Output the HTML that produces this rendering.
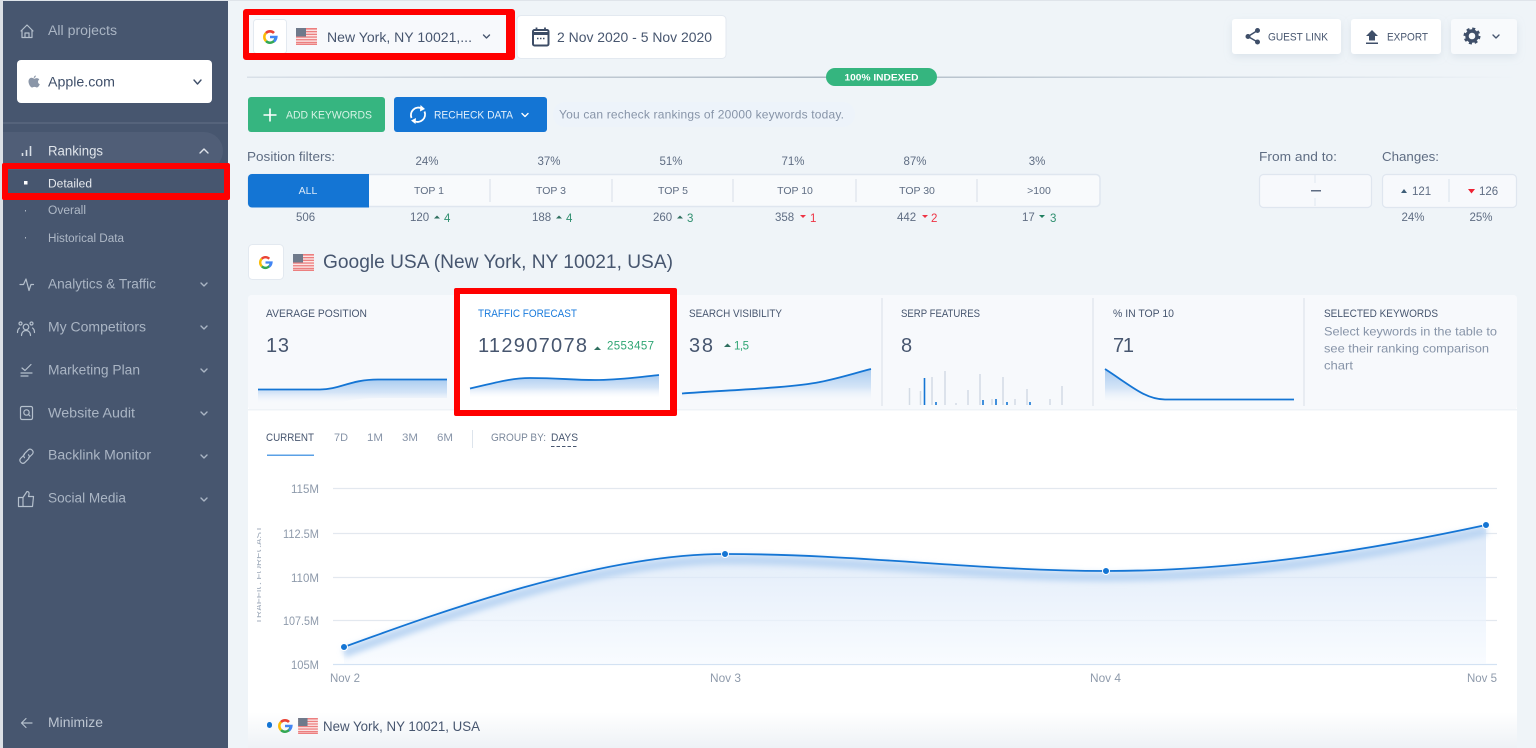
<!DOCTYPE html>
<html><head><meta charset="utf-8"><title>Rankings</title>
<style>
html,body{margin:0;padding:0;width:1536px;height:748px;overflow:hidden;background:#eff4f8}
svg{display:block}
text{font-family:"Liberation Sans",sans-serif;fill:#47566f}
.ch{fill:none;stroke-width:1.4;stroke-linecap:round;stroke-linejoin:round}
.ic{fill:none;stroke:#b4bfcc;stroke-width:1.2;stroke-linecap:round;stroke-linejoin:round}
.nav{font-size:13.5px;fill:#aab5c4}
.sub{font-size:11.5px;fill:#aeb8c6}
.pct{font-size:11.5px;fill:#5f6d83;text-anchor:middle}
.cnt{font-size:11.5px;fill:#5f6d83}
.top{font-size:10.5px;fill:#5f6d83;text-anchor:middle}
.cap{font-size:11px;fill:#47566f}
.num{font-size:20px;fill:#47566f}
.axis{font-size:12px;fill:#8e9aab}
</style></head><body>
<svg width="1536" height="748" viewBox="0 0 1536 748" xmlns="http://www.w3.org/2000/svg">
<defs>
<symbol id="g" viewBox="0 0 20 20" overflow="visible">
<path d="M17 10 A7 7 0 0 1 5 15" fill="none" stroke="#34a853" stroke-width="3.2"/>
<path d="M5 15 A7 7 0 0 1 5 5" fill="none" stroke="#fbbc05" stroke-width="3.2"/>
<path d="M5 5 A7 7 0 0 1 15 5" fill="none" stroke="#ea4335" stroke-width="3.2"/>
<path d="M10 10 H18 A8 8 0 0 1 15 15.5" fill="none" stroke="#4285f4" stroke-width="3"/>
</symbol>
<symbol id="flag" viewBox="0 0 21 17">
<rect width="21" height="17" rx="2" fill="#fbe4e4"/>
<g fill="#ec7f7f"><rect y="0" width="21" height="1.6"/><rect y="3" width="21" height="1.3"/><rect y="5.7" width="21" height="1.3"/><rect y="8.4" width="21" height="1.3"/><rect y="11.1" width="21" height="1.3"/><rect y="13.8" width="21" height="1.3"/><rect y="15.6" width="21" height="1.4"/></g>
<rect width="10" height="8.5" fill="#6f7a8b"/>
</symbol>
<linearGradient id="area" x1="0" y1="0" x2="0" y2="1"><stop offset="0" stop-color="#cfe0f5"/><stop offset="1" stop-color="#f6faff"/></linearGradient>
<linearGradient id="spark" x1="0" y1="0" x2="0" y2="1"><stop offset="0" stop-color="#a9cbf0"/><stop offset=".55" stop-color="#d5e5f7"/><stop offset="1" stop-color="#f7f9fc" stop-opacity="0"/></linearGradient>
<linearGradient id="bot" x1="0" y1="0" x2="0" y2="1"><stop offset="0" stop-color="#fff"/><stop offset="1" stop-color="#eef2f6"/></linearGradient>
<linearGradient id="hr" x1="0" y1="0" x2="1" y2="0"><stop offset="0" stop-color="#d9e0e8"/><stop offset=".45" stop-color="#aeb9c4"/><stop offset=".75" stop-color="#cfd8e1"/><stop offset="1" stop-color="#eff4f8"/></linearGradient>
<filter id="bl" x="-10%" y="-50%" width="120%" height="200%"><feGaussianBlur stdDeviation="3"/></filter>
<filter id="sh" x="-20%" y="-30%" width="140%" height="170%"><feDropShadow dx="0" dy="3" stdDeviation="4" flood-color="#9fb0c4" flood-opacity=".25"/></filter>
<clipPath id="yclip"><rect x="257" y="525" width="4" height="102"/></clipPath>
</defs>

<!-- page bg -->
<rect width="1536" height="748" fill="#eff4f8"/>
<rect width="1536" height="1" fill="#dfe4ea"/>

<!-- sidebar -->
<rect x="0" y="0" width="3" height="748" fill="#dde1e6"/>
<rect x="3" y="1" width="225" height="747" fill="#47566f"/>
<rect x="3" y="122" width="225" height="2" fill="#55637b"/>
<path d="M3 132 H204 A19 19 0 0 1 204 170 H3Z" fill="#505e77"/>

<path class="ic" d="M21 31 L27 25 L33 31 M22 30 V37.5 H32 V30 M25 37.5 V33 H29 V37.5"/>
<text class="nav" x="48" y="35" textLength="69" lengthAdjust="spacingAndGlyphs">All projects</text>
<rect x="17" y="60" width="195" height="43" rx="4" fill="#fff"/>
<path d="M35.800 75.500c.2 1.200-.8 2.400-2 2.500-.2-1.200.9-2.400 2-2.500zM34.300 78.700c.8 0 1.500-.6 2.400-.6 1 0 2 .5 2.600 1.400-1.900 1.200-1.600 3.900.5 4.800-.6 1.500-1.700 3.200-2.900 3.200-.9 0-1.300-.6-2.400-.6s-1.500.6-2.400.6c-1.600 0-3.600-3.400-3.600-6 0-2.400 1.600-3.700 3.100-3.700 1 0 1.800.7 2.700.9z" fill="#8a96a8"/>
<text x="48" y="86.500" font-size="14" textLength="67" lengthAdjust="spacingAndGlyphs" style="fill:#3f4f69">Apple.com</text>
<path class="ch" stroke="#3f4f69" d="M194 80 L197.500 84 L201 80"/>

<path d="M22.500 156v-3M26.500 156v-6M30.500 156v-10" stroke="#d9dfe6" stroke-width="1.600" fill="none"/>
<text x="48" y="155.500" font-size="13.500" textLength="55" lengthAdjust="spacingAndGlyphs" style="fill:#dfe4ea">Rankings</text>
<path class="ch" stroke="#dfe4ea" d="M200 153 L204 149 L208 153"/>
<rect x="24" y="181" width="3.500" height="3.500" fill="#fff"/>
<text class="sub" x="48" y="187.500" textLength="44" lengthAdjust="spacingAndGlyphs" style="fill:#e6e9ee">Detailed</text>
<rect x="25" y="210" width="1" height="1.500" fill="#aeb8c6"/>
<text class="sub" x="48" y="214" textLength="38" lengthAdjust="spacingAndGlyphs">Overall</text>
<rect x="25" y="237" width="1" height="1.500" fill="#aeb8c6"/>
<text class="sub" x="48" y="242" textLength="76" lengthAdjust="spacingAndGlyphs">Historical Data</text>

<polyline class="ic" points="20,284.500 23.500,284.500 26,279 29,290.500 31,284.500 33.500,284.500"/>
<text class="nav" x="48" y="288.500" textLength="108" lengthAdjust="spacingAndGlyphs">Analytics &amp; Traffic</text>
<path class="ch" stroke="#aab5c4" d="M201 283 L204 286 L207 283"/>

<g class="ic"><circle cx="26" cy="327" r="2.800"/><circle cx="20.500" cy="323.500" r="1.500"/><circle cx="31.500" cy="323.500" r="1.500"/><path d="M21.500 335.500c0-3 2-5 4.500-5s4.500 2 4.500 5M17.500 332.500c0-2 .5-3.500 2-4.500M34.500 332.500c0-2-.5-3.500-2-4.500"/></g>
<text class="nav" x="48" y="331.500" textLength="98" lengthAdjust="spacingAndGlyphs">My Competitors</text>
<path class="ch" stroke="#aab5c4" d="M201 326 L204 329 L207 326"/>

<path class="ic" d="M22 368 L25 370.500 L31 364.500 M21 373 H32 M21 376 H28"/>
<text class="nav" x="48" y="374.500" textLength="92" lengthAdjust="spacingAndGlyphs">Marketing Plan</text>
<path class="ch" stroke="#aab5c4" d="M201 369 L204 372 L207 369"/>

<g class="ic"><rect x="20.500" y="406.500" width="12" height="13" rx="1.500"/><circle cx="26.500" cy="412.500" r="2.700"/><path d="M28.500 414.500 L30 416"/></g>
<text class="nav" x="48" y="417.500" textLength="87" lengthAdjust="spacingAndGlyphs">Website Audit</text>
<path class="ch" stroke="#aab5c4" d="M201 412 L204 415 L207 412"/>

<path class="ic" stroke-width="1" d="M24.500 454.500 L20.500 458.500a3 3 0 0 0 4 4.300L28.500 458.800a3 3 0 0 0 0-4M28.500 458 L32.500 454a3 3 0 0 0-4-4.300L24.500 453.700a3 3 0 0 0 0 4"/>
<text class="nav" x="48" y="459.500" textLength="103" lengthAdjust="spacingAndGlyphs">Backlink Monitor</text>
<path class="ch" stroke="#aab5c4" d="M201 455 L204 458 L207 455"/>

<path class="ic" d="M18.500 497.500 H23 V506.500 H18.500Z M23 497.500 L27 491.500c1.500 0 2.500 1 2 3L28.500 496.500 H33.500 L32.500 506.500 H23"/>
<text class="nav" x="48" y="502.500" textLength="78" lengthAdjust="spacingAndGlyphs">Social Media</text>
<path class="ch" stroke="#aab5c4" d="M201 498 L204 501 L207 498"/>

<path class="ic" d="M32 723 H21.500 M26 718.500 L21.500 723 L26 727.500" stroke="#c3ccd7"/>
<text class="nav" x="48" y="727" textLength="55" lengthAdjust="spacingAndGlyphs" style="fill:#bcc5d1">Minimize</text>

<!-- header -->
<rect x="249" y="15" width="257" height="38" fill="#f7f9fc"/>
<rect x="253.500" y="19.500" width="33" height="34" rx="3" fill="#fff" stroke="#e3e9f0"/>
<use href="#g" x="262" y="29" width="16" height="16"/>
<use href="#flag" x="296" y="28" width="21" height="17"/>
<text x="327" y="42" font-size="13.500" textLength="145" lengthAdjust="spacingAndGlyphs">New York, NY 10021,...</text>
<path class="ch" stroke="#47566f" d="M483.500 35 L486.500 38 L489.500 35"/>

<rect x="517" y="15.500" width="209" height="43" rx="4" fill="#fff" stroke="#e3e9f0"/>
<g fill="none" stroke="#3c4c66"><rect x="533" y="30" width="15.500" height="15.500" rx="1.500" stroke-width="2"/><path d="M533 33.500 H548.500" stroke-width="3"/><path d="M536.500 27.500 V31 M545 27.500 V31" stroke-width="1.800"/><path d="M537 38.500 H544.500" stroke-width="1.500" stroke-dasharray="1.500 1.500"/></g>
<text x="557" y="42" font-size="14" textLength="155" lengthAdjust="spacingAndGlyphs">2 Nov 2020 - 5 Nov 2020</text>

<rect x="1232" y="19" width="109" height="35" rx="3" fill="#fff" filter="url(#sh)"/>
<g fill="#3f4f69" stroke="#3f4f69"><circle cx="1257.500" cy="30.500" r="2"/><circle cx="1248" cy="36.500" r="2"/><circle cx="1257.500" cy="42" r="2"/><path d="M1257.500 30.500 L1248 36.500 L1257.500 42" fill="none" stroke-width="1.500"/></g>
<text x="1268" y="40.500" font-size="11" textLength="60" lengthAdjust="spacingAndGlyphs">GUEST LINK</text>
<rect x="1351" y="19" width="90" height="35" rx="3" fill="#fff" filter="url(#sh)"/>
<path d="M1372 30 L1378 36 H1375 V40.500 H1369 V36 H1366Z M1366 42.500 H1378 V44 H1366Z" fill="#3f4f69"/>
<text x="1387" y="40.500" font-size="11" textLength="41" lengthAdjust="spacingAndGlyphs">EXPORT</text>
<rect x="1451" y="19" width="66" height="35" rx="3" fill="#f8fafc" filter="url(#sh)"/>
<g fill="none" stroke="#3f4f69"><circle cx="1472" cy="36" r="5" stroke-width="3.400"/><circle cx="1472" cy="36" r="7.300" stroke-width="2.400" stroke-dasharray="3 2.730"/></g>
<path class="ch" stroke="#47566f" d="M1493 35 L1496 38 L1499 35"/>

<rect x="247" y="76.500" width="1270" height="1.500" fill="url(#hr)"/>
<rect x="826" y="68" width="111" height="18" rx="9" fill="#35b57f"/>
<text x="881.500" y="80.500" font-size="9.500" text-anchor="middle" font-weight="bold" textLength="74" lengthAdjust="spacingAndGlyphs" style="fill:#fff">100% INDEXED</text>

<!-- actions -->
<rect x="248" y="97" width="137" height="35" rx="3" fill="#36b580"/>
<path d="M270 108.500 V121.500 M263.500 115 H276.500" stroke="#fff" stroke-width="1.600"/>
<text x="286" y="118.500" font-size="11" textLength="86" lengthAdjust="spacingAndGlyphs" style="fill:#d7f3e6">ADD KEYWORDS</text>
<rect x="394" y="97" width="153" height="35" rx="3" fill="#1475d4"/>
<g fill="none" stroke="#fff" stroke-width="1.800"><path d="M411.500 118 A7.500 7.500 0 0 1 422 108.500"/><path d="M424.500 111.500 A7.500 7.500 0 0 1 414 121"/></g>
<path d="M420.500 105 L425 109 L420 111.500Z M415.500 124 L411 120.500 L416 118Z" fill="#fff"/>
<text x="434" y="118.500" font-size="11" textLength="79" lengthAdjust="spacingAndGlyphs" style="fill:#e2effb">RECHECK DATA</text>
<path class="ch" stroke="#fff" d="M522 113.500 L525 116.500 L528 113.500"/>
<rect x="553" y="102" width="302" height="25" rx="12" fill="#edf3fa"/>
<text x="559" y="118.500" font-size="12" textLength="285" style="fill:#8794a8">You can recheck rankings of 20000 keywords today.</text>

<!-- filters -->
<text x="247" y="161" font-size="12.500" textLength="88" lengthAdjust="spacingAndGlyphs" style="fill:#5f6d83">Position filters:</text>
<text class="pct" x="427" y="165">24%</text><text class="pct" x="549" y="165">37%</text><text class="pct" x="671" y="165">51%</text><text class="pct" x="793" y="165">71%</text><text class="pct" x="915" y="165">87%</text><text class="pct" x="1037" y="165">3%</text>
<rect x="248" y="174.500" width="852" height="32" rx="4" fill="#f8fafc" stroke="#dfe6ef" stroke-width="1.500"/>
<path d="M252 174 H369 V207.500 H252 A4 4 0 0 1 248 203.500 V178 A4 4 0 0 1 252 174Z" fill="#1475d4"/>
<path d="M490 179 V202 M612 179 V202 M733 179 V202 M856 179 V202 M977 179 V202" stroke="#d8dfe8" stroke-width="1"/>
<text class="top" x="308" y="194" style="fill:#dbe9f8">ALL</text>
<text class="top" x="429" y="194">TOP 1</text><text class="top" x="551" y="194">TOP 3</text><text class="top" x="673" y="194">TOP 5</text><text class="top" x="795" y="194">TOP 10</text><text class="top" x="917" y="194">TOP 30</text><text class="top" x="1039" y="194">&gt;100</text>

<text class="cnt" x="296" y="221">506</text>
<text class="cnt" x="410" y="221">120</text><path d="M434 218.500 L437 215.500 L440 218.500Z" fill="#2f6f5f"/><text class="cnt" x="444" y="222" style="fill:#2f8f6f">4</text>
<text class="cnt" x="532" y="221">188</text><path d="M556 218.500 L559 215.500 L562 218.500Z" fill="#2f6f5f"/><text class="cnt" x="566" y="222" style="fill:#2f8f6f">4</text>
<text class="cnt" x="653" y="221">260</text><path d="M677 218.500 L680 215.500 L683 218.500Z" fill="#2f6f5f"/><text class="cnt" x="687" y="222" style="fill:#2f8f6f">3</text>
<text class="cnt" x="775" y="221">358</text><path d="M800 215 L803 218 L806 215Z" fill="#ee3344"/><text class="cnt" x="810" y="222" style="fill:#ee3344">1</text>
<text class="cnt" x="897" y="221">442</text><path d="M922 215 L925 218 L928 215Z" fill="#ee3344"/><text class="cnt" x="931" y="222" style="fill:#ee3344">2</text>
<text class="cnt" x="1022" y="221">17</text><path d="M1039 215 L1042 218 L1045 215Z" fill="#1f7f5f"/><text class="cnt" x="1050" y="222" style="fill:#2f8f6f">3</text>

<text x="1259" y="161" font-size="12.500" textLength="78" lengthAdjust="spacingAndGlyphs" style="fill:#5f6d83">From and to:</text>
<rect x="1259.500" y="174.500" width="112" height="33" rx="4" fill="#f7f9fc" stroke="#dfe6ef" stroke-width="1.200"/>
<path d="M1315 175 V183 M1315 198 V206" stroke="#dfe6ef"/><rect x="1311" y="190" width="10" height="1.500" fill="#5f6d83"/>
<text x="1382" y="161" font-size="12.500" textLength="57" lengthAdjust="spacingAndGlyphs" style="fill:#5f6d83">Changes:</text>
<rect x="1382.500" y="174.500" width="134" height="33" rx="4" fill="#f7f9fc" stroke="#dfe6ef" stroke-width="1.200"/>
<path d="M1449 179 V202" stroke="#dfe6ef" stroke-width="1.200"/>
<path d="M1401 193 L1404 189 L1407 193Z" fill="#3f5f78"/><text class="cnt" x="1412" y="195">121</text>
<path d="M1468 189 L1471.500 193.500 L1475 189Z" fill="#ee2233"/><text class="cnt" x="1479" y="195">126</text>
<text class="pct" x="1413" y="221">24%</text><text class="pct" x="1481" y="221">25%</text>

<!-- title -->
<rect x="248.500" y="244.500" width="35" height="35" rx="4" fill="#fff" stroke="#e3e9f0"/>
<use href="#g" x="258" y="255" width="15" height="15"/>
<use href="#flag" x="293" y="254" width="21" height="17"/>
<text x="323" y="268" font-size="19.500" textLength="350" lengthAdjust="spacingAndGlyphs">Google USA (New York, NY 10021, USA)</text>

<!-- panel -->
<rect x="248" y="295" width="1269" height="453" rx="4" fill="#fff"/>
<rect x="248" y="295" width="1269" height="115" rx="4" fill="#f7f9fc"/>
<rect x="248" y="409" width="1269" height="1.500" fill="#eff3f7"/>
<rect x="460" y="294" width="210" height="116" fill="#fff"/>
<path d="M882 298 V406 M1093 298 V406 M1304 298 V406" stroke="#d8dfe8"/>

<text class="cap" x="266" y="317" textLength="101" lengthAdjust="spacingAndGlyphs">AVERAGE POSITION</text>
<text class="num" x="266" y="352" textLength="23">13</text>
<path d="M258 389 H320 C340 389 350 379 378 379 H447 V398 H378 C350 398 340 404 320 404 H258Z" fill="url(#spark)"/>
<path d="M258 389.500 H320 C340 389.500 350 379.500 378 379.500 H447" fill="none" stroke="#1475d4" stroke-width="1.800"/>

<text class="cap" x="478" y="317" textLength="99" lengthAdjust="spacingAndGlyphs" style="fill:#1a7bdc">TRAFFIC FORECAST</text>
<text class="num" x="478" y="352" textLength="109">112907078</text>
<path d="M594 350 L597.500 346.500 L601 350Z" fill="#2f6f5f"/>
<text x="607" y="349.500" font-size="11.500" textLength="47" style="fill:#2fa574">2553457</text>
<path d="M470 388.500 C495 383 510 378 530 378 C560 378 570 380 595 380 C620 380 640 377 659 375 V398 H470Z" fill="url(#spark)"/>
<path d="M470 388.500 C495 383 510 378 530 378 C560 378 570 380 595 380 C620 380 640 377 659 375" fill="none" stroke="#1475d4" stroke-width="1.800"/>

<text class="cap" x="689" y="317" textLength="93" lengthAdjust="spacingAndGlyphs">SEARCH VISIBILITY</text>
<text class="num" x="689" y="352" textLength="24">38</text>
<path d="M724 347 L727.500 343.500 L731 347Z" fill="#2f6f5f"/>
<text x="734" y="349.500" font-size="11.500" textLength="15" style="fill:#2fa574">1,5</text>
<path d="M682 393.500 C730 390 790 388 820 382 C840 378 855 373 871 369 V402 H682Z" fill="url(#spark)"/>
<path d="M682 393.500 C730 390 790 388 820 382 C840 378 855 373 871 369" fill="none" stroke="#1475d4" stroke-width="1.800"/>

<text class="cap" x="901" y="317" textLength="79" lengthAdjust="spacingAndGlyphs">SERP FEATURES</text>
<text class="num" x="901" y="352">8</text>
<path d="M909.500 405V388M920.500 405V391M932 405V377M945 405V371M956 405V403M968 405V390M980 405V374M992 405V399M1003 405V377M1015 405V399M1027 405V389M1050 405V399M1062 405V386" stroke="#d3dbe5" stroke-width="1.500" fill="none"/>
<path d="M924.500 405V378M936 405V402M983 405V400M996 405V399M1007 405V402M1030 405V402" stroke="#1475d4" stroke-width="1.600" fill="none"/>

<text class="cap" x="1113" y="317" textLength="61" lengthAdjust="spacingAndGlyphs">% IN TOP 10</text>
<text class="num" x="1113" y="352" textLength="21">71</text>
<path d="M1105 369 C1130 385 1145 399 1165 399.500 H1294 V404 H1165 L1105 400Z" fill="url(#spark)"/>
<path d="M1105 369 C1130 385 1145 399.500 1165 399.500 H1294" fill="none" stroke="#1475d4" stroke-width="1.800"/>

<text class="cap" x="1324" y="317" textLength="114" lengthAdjust="spacingAndGlyphs">SELECTED KEYWORDS</text>
<text x="1324" y="335.500" font-size="12" textLength="173" lengthAdjust="spacingAndGlyphs" style="fill:#8794a8">Select keywords in the table to</text>
<text x="1324" y="352.500" font-size="12" textLength="165" lengthAdjust="spacingAndGlyphs" style="fill:#8794a8">see their ranking comparison</text>
<text x="1324" y="369.500" font-size="12" textLength="29" lengthAdjust="spacingAndGlyphs" style="fill:#8794a8">chart</text>

<!-- tabs -->
<text class="cap" x="266" y="441" textLength="48" lengthAdjust="spacingAndGlyphs">CURRENT</text>
<rect x="267" y="454.500" width="47" height="1.500" fill="#5aa0e6"/>
<text class="cap" x="334" y="441" textLength="14" lengthAdjust="spacingAndGlyphs" style="fill:#8794a8">7D</text><text class="cap" x="367" y="441" textLength="16" lengthAdjust="spacingAndGlyphs" style="fill:#8794a8">1M</text><text class="cap" x="402" y="441" textLength="16" lengthAdjust="spacingAndGlyphs" style="fill:#8794a8">3M</text><text class="cap" x="437" y="441" textLength="16" lengthAdjust="spacingAndGlyphs" style="fill:#8794a8">6M</text>
<path d="M472.500 430 V448" stroke="#dde4ec"/>
<text class="cap" x="491" y="441" textLength="55" lengthAdjust="spacingAndGlyphs" style="fill:#7c899c">GROUP BY:</text>
<text class="cap" x="551" y="441" textLength="27" lengthAdjust="spacingAndGlyphs">DAYS</text>
<path d="M551 446.500 H578" stroke="#47566f" stroke-dasharray="3.500 2"/>

<!-- main chart -->
<path d="M333 488.500 H1497 M333 533.500 H1497 M333 577.500 H1497 M333 620.500 H1497" stroke="#e3e8ef" stroke-width="1.200"/>
<path d="M333 664.500 H1497" stroke="#d3e2f3" stroke-width="1.200"/>
<text class="axis" x="291" y="493" textLength="28" lengthAdjust="spacingAndGlyphs">115M</text>
<text class="axis" x="283" y="538" textLength="36" lengthAdjust="spacingAndGlyphs">112.5M</text>
<text class="axis" x="291" y="582" textLength="28" lengthAdjust="spacingAndGlyphs">110M</text>
<text class="axis" x="283" y="625" textLength="36" lengthAdjust="spacingAndGlyphs">107.5M</text>
<text class="axis" x="291" y="669" textLength="28" lengthAdjust="spacingAndGlyphs">105M</text>
<g clip-path="url(#yclip)"><text transform="translate(262 624) rotate(-90)" font-size="10" textLength="98" lengthAdjust="spacingAndGlyphs" style="fill:#a3aebd">TRAFFIC FORECAST</text></g>
<path d="M344 647 C440 612 600 554 725 554 C860 554 980 571 1106 571 C1240 571 1370 550 1486 525 V664 H344Z" fill="url(#area)" opacity=".7"/>
<path d="M344 653 C440 618 600 560 725 560 C860 560 980 577 1106 577 C1240 577 1370 556 1486 531" fill="none" stroke="#bcd6f3" stroke-width="9" filter="url(#bl)"/>
<path d="M344 647 C440 612 600 554 725 554 C860 554 980 571 1106 571 C1240 571 1370 550 1486 525" fill="none" stroke="#1475d4" stroke-width="1.800"/>
<circle cx="344" cy="647" r="3.500" fill="#1475d4" stroke="#fff"/><circle cx="725" cy="554" r="3.500" fill="#1475d4" stroke="#fff"/><circle cx="1106" cy="571" r="3.500" fill="#1475d4" stroke="#fff"/><circle cx="1486" cy="525" r="3.500" fill="#1475d4" stroke="#fff"/>
<text class="axis" x="330" y="682" textLength="30" lengthAdjust="spacingAndGlyphs">Nov 2</text>
<text class="axis" x="710" y="682" textLength="31" lengthAdjust="spacingAndGlyphs">Nov 3</text>
<text class="axis" x="1090" y="682" textLength="31" lengthAdjust="spacingAndGlyphs">Nov 4</text>
<text class="axis" x="1467" y="682" textLength="30" lengthAdjust="spacingAndGlyphs">Nov 5</text>

<!-- legend -->
<rect x="248" y="712" width="1269" height="36" fill="url(#bot)"/>
<rect x="267" y="722" width="5" height="6" rx="2.500" fill="#1475d4"/>
<use href="#g" x="277" y="718" width="16" height="16"/>
<use href="#flag" x="298" y="718" width="20" height="16"/>
<text x="323" y="731" font-size="13.500" textLength="157" lengthAdjust="spacingAndGlyphs">New York, NY 10021, USA</text>

<!-- red highlight boxes -->
<path fill="#ff0000" fill-rule="evenodd" d="M246 9 H512 A3 3 0 0 1 515 12 V57 A3 3 0 0 1 512 60 H246 A3 3 0 0 1 243 57 V12 A3 3 0 0 1 246 9Z M249 15 V53 H506 V15Z"/>
<path fill="#ff0000" fill-rule="evenodd" d="M4 163 H228 A2 2 0 0 1 230 165 V198 A2 2 0 0 1 228 200 H4 A2 2 0 0 1 2 198 V165 A2 2 0 0 1 4 163Z M8 169 V193 H224 V169Z"/>
<path fill="#ff0000" fill-rule="evenodd" d="M456 288 H675 A2 2 0 0 1 677 290 V414 A2 2 0 0 1 675 416 H456 A2 2 0 0 1 454 414 V290 A2 2 0 0 1 456 288Z M460 294 V410 H670 V294Z"/>
</svg>
</body></html>
